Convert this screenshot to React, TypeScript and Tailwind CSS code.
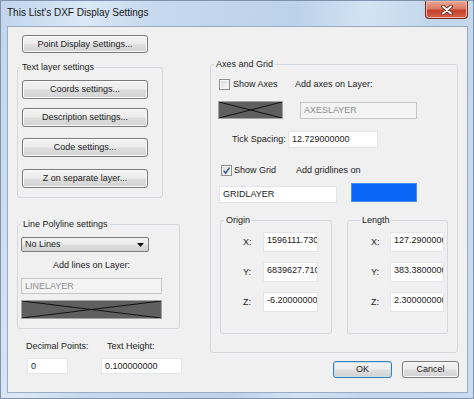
import React from "react";
import clsx from "clsx";

interface BoxProps {
  className?: string;
  children?: React.ReactNode;
}

const Btn: React.FC<BoxProps & { isDefault?: boolean }> = ({ className, children, isDefault }) => (
  <button
    type="button"
    className={clsx(
      "flex shrink-0 items-center justify-center rounded-[3px] border bg-[linear-gradient(#f3f3f3,#ececec_45%,#dedede_55%,#d2d2d2)] text-[9px] leading-[11px] text-[#1b1b1b]",
      isDefault
        ? "border-[#3c7fb1] shadow-[inset_0_0_0_1px_#bfe3f8]"
        : "border-[#7a7a7a] shadow-[inset_0_0_0_1px_#fbfbfb]",
      className
    )}
  >
    {children}
  </button>
);

const Field: React.FC<{ value: string; className?: string; disabled?: boolean }> = ({
  value,
  className,
  disabled,
}) => (
  <div
    className={clsx(
      "flex shrink-0 overflow-hidden whitespace-nowrap border px-[3px] text-[9px] leading-[11px]",
      disabled
        ? "border-[#c6c6c6] bg-[#f3f3f3] text-[#8d8d8d]"
        : "border-[#e2e5e9] bg-white text-[#222]",
      className ?? "items-center"
    )}
  >
    {value}
  </div>
);

const Check: React.FC<{ checked?: boolean; className?: string }> = ({ checked, className }) => (
  <span
    className={clsx(
      "flex h-[11px] w-[11px] shrink-0 items-center justify-center border border-[#8e8f8f] bg-[linear-gradient(135deg,#d9d9d9,#fafafa)] shadow-[inset_0_0_0_1px_#f4f4f4]",
      className
    )}
  >
    {checked && (
      <svg viewBox="0 0 9 9" className="h-[9px] w-[9px]">
        <path d="M1.6 4.6 L3.6 7.2 L7.6 1.6" fill="none" stroke="#3b5683" strokeWidth="1.5" />
      </svg>
    )}
  </span>
);

const XBox: React.FC<{ className?: string }> = ({ className }) => (
  <div className={clsx("shrink-0 border border-[#a3a3a3] bg-[#5f5f5f]", className)}>
    <svg className="block h-full w-full" preserveAspectRatio="none" viewBox="0 0 100 100">
      <path
        d="M0 0 L100 100 M0 100 L100 0"
        stroke="#141414"
        strokeWidth="1"
        vectorEffect="non-scaling-stroke"
      />
    </svg>
  </div>
);

const Group: React.FC<BoxProps & { label: string; legendClass?: string }> = ({
  label,
  legendClass,
  className,
  children,
}) => (
  <fieldset className={clsx("shrink-0 rounded-[3px] border border-[#d3d9df]", className)}>
    <legend className={clsx("px-[2px] text-[9px] leading-[11px] text-[#1b1b1b]", legendClass)}>
      {label}
    </legend>
    {children}
  </fieldset>
);

const CoordRow: React.FC<{ label: string; value: string; className: string; labelClass: string; width: string }> = ({
  label,
  value,
  className,
  labelClass,
  width,
}) => (
  <div className={clsx("flex items-center", className)}>
    <span className={labelClass}>{label}</span>
    <Field value={value} className={clsx("h-[20px] items-start pt-[2px]", width)} />
  </div>
);

export default function App() {
  return (
    <div className="h-[399px] w-[474px] overflow-hidden bg-white font-['Liberation_Sans',Arial,sans-serif] text-[9px] leading-[11px] text-[#1b1b1b]">
      <div className="flex h-full w-full flex-col border border-[#7f93ad] bg-[linear-gradient(100deg,#bfd4ec_0%,#dbe8f6_16%,#c6d9ee_28%,#bcd2ea_55%,#d3e3f3_68%,#c2d6ec_80%,#c9dcf0_100%)]">
        {/* title bar */}
        <div className="flex h-[25px] shrink-0 items-start justify-between">
          <span className="ml-[6px] mt-[6px] text-[10px] leading-[12px] text-[#161616]">
            This List's DXF Display Settings
          </span>
          <div className="mr-[5px] flex h-[18px] w-[43px] items-center justify-center rounded-b-[4px] border border-t-0 border-[#7b2a1f] bg-[linear-gradient(#eaa898,#dc7966_45%,#c4422d_55%,#d4634a)] shadow-[inset_0_0_0_1px_#f0b8a8]">
            <svg viewBox="0 0 14 10" className="h-[10px] w-[14px]">
              <path d="M3 1.5 L11 8.5 M11 1.5 L3 8.5" stroke="#5a1a10" strokeWidth="3.6" strokeLinecap="round" />
              <path d="M3 1.5 L11 8.5 M11 1.5 L3 8.5" stroke="#ffffff" strokeWidth="2" strokeLinecap="round" />
            </svg>
          </div>
        </div>

        {/* client area */}
        <div className="ml-[6px] flex h-[367px] w-[461px] border border-[#9aabc0] bg-[#f0f0f0]">
          {/* left column */}
          <div className="ml-[9px] w-[166px] shrink-0">
            <Btn className="ml-[5px] mt-[8px] h-[18px] w-[126px]">Point Display Settings...</Btn>

            <Group label="Text layer settings" legendClass="ml-[2px]" className="mt-[9px] w-[146px] pb-[9px]">
              <Btn className="ml-[4px] mt-[7px] h-[19px] w-[126px]">Coords settings...</Btn>
              <Btn className="ml-[4px] mt-[9px] h-[19px] w-[126px]">Description settings...</Btn>
              <Btn className="ml-[4px] mt-[11px] h-[19px] w-[126px]">Code settings...</Btn>
              <Btn className="ml-[4px] mt-[12px] h-[19px] w-[126px]">Z on separate layer...</Btn>
            </Group>

            <Group label="Line Polyline settings" legendClass="ml-[3px]" className="mt-[21px] w-[163px] pb-[9px]">
              <div className="ml-[3px] mt-[7px] flex h-[15px] w-[128px] items-center justify-between rounded-[2px] border border-[#7a7a7a] bg-[linear-gradient(#f3f3f3,#ececec_45%,#dedede_55%,#d2d2d2)] pl-[3px] pr-[4px]">
                <span>No Lines</span>
                <svg viewBox="0 0 7 4" className="h-[4px] w-[7px]">
                  <path d="M0 0 H7 L3.5 4 Z" fill="#111" />
                </svg>
              </div>
              <div className="ml-[3px] mt-[8px] w-[141px] text-center">Add lines on Layer:</div>
              <Field disabled value="LINELAYER" className="ml-[3px] mt-[7px] h-[16px] w-[141px] items-center" />
              <XBox className="ml-[3px] mt-[6px] h-[19px] w-[141px]" />
            </Group>

            <div className="mt-[12px] flex">
              <div className="ml-[9px] w-[75px] shrink-0">
                <div>Decimal Points:</div>
                <Field value="0" className="ml-[1px] mt-[6px] h-[16px] w-[41px] items-center" />
              </div>
              <div>
                <div className="ml-[6px]">Text Height:</div>
                <Field value="0.100000000" className="mt-[6px] h-[16px] w-[81px] items-center" />
              </div>
            </div>
          </div>

          {/* right column */}
          <div className="ml-[27px] w-[249px] shrink-0">
            <Group label="Axes and Grid" legendClass="ml-[3px]" className="mt-[32px] w-[248px] pb-[18px]">
              <div className="mt-[8px] flex h-[12px] items-center">
                <Check className="ml-[8px]" />
                <span className="ml-[3px] w-[62px]">Show Axes</span>
                <span>Add axes on Layer:</span>
              </div>

              <div className="mt-[11px] flex items-start">
                <XBox className="ml-[7px] h-[18px] w-[65px]" />
                <Field disabled value="AXESLAYER" className="ml-[17px] mt-[1px] h-[17px] w-[117px] items-center" />
              </div>

              <div className="mt-[12px] flex items-center">
                <span className="ml-[21px] w-[56px]">Tick Spacing:</span>
                <Field value="12.729000000" className="h-[17px] w-[90px] items-center" />
              </div>

              <div className="mt-[16px] flex h-[12px] items-center">
                <Check checked className="ml-[10px]" />
                <span className="ml-[2px] w-[62px]">Show Grid</span>
                <span>Add gridlines on</span>
              </div>

              <div className="mt-[7px] flex items-start">
                <Field value="GRIDLAYER" className="ml-[8px] mt-[3px] h-[17px] w-[118px] items-center" />
                <div className="ml-[14px] h-[19px] w-[66px] border border-[#4a8cf0] bg-[#0766f5]" />
              </div>

              <div className="mt-[12px] flex items-start">
                <Group label="Origin" legendClass="ml-[3px]" className="ml-[9px] w-[112px] pb-[21px]">
                  <CoordRow label="X:" value="1596111.730" className="mt-[6px]" labelClass="ml-[22px] w-[20px]" width="w-[55px]" />
                  <CoordRow label="Y:" value="6839627.710" className="mt-[10px]" labelClass="ml-[22px] w-[20px]" width="w-[55px]" />
                  <CoordRow label="Z:" value="-6.200000000" className="mt-[10px]" labelClass="ml-[22px] w-[20px]" width="w-[55px]" />
                </Group>
                <Group label="Length" legendClass="ml-[12px]" className="ml-[15px] w-[101px] pb-[21px]">
                  <CoordRow label="X:" value="127.290000000" className="mt-[6px]" labelClass="ml-[23px] w-[19px]" width="w-[54px]" />
                  <CoordRow label="Y:" value="383.380000000" className="mt-[10px]" labelClass="ml-[23px] w-[19px]" width="w-[54px]" />
                  <CoordRow label="Z:" value="2.300000000" className="mt-[10px]" labelClass="ml-[23px] w-[19px]" width="w-[54px]" />
                </Group>
              </div>
            </Group>

            <div className="mt-[8px] flex justify-end gap-[10px]">
              <Btn isDefault className="h-[17px] w-[59px]">OK</Btn>
              <Btn className="h-[17px] w-[57px]">Cancel</Btn>
            </div>
          </div>
        </div>
      </div>
    </div>
  );
}
